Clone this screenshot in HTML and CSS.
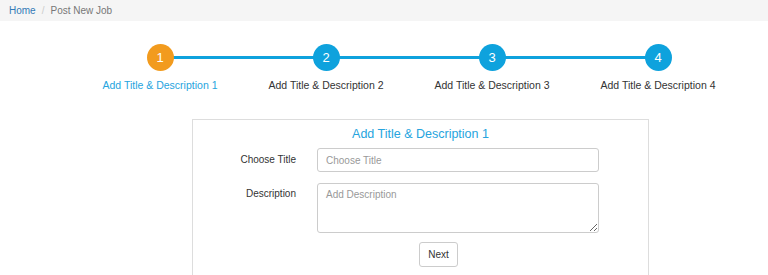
FILE: index.html
```html
<!DOCTYPE html>
<html lang="en">
<head>
    <meta charset="UTF-8">
    <title>Post New Job</title>
    <link rel="stylesheet" href="styles.css">
</head>
<body>
    <ol class="breadcrumb">
        <li><a href="#">Home</a></li>
        <li class="active">Post New Job</li>
    </ol>

    <div class="steps">
        <div class="step current">
            <span class="step-num">1</span>
            <span class="step-label">Add Title &amp; Description 1</span>
        </div>
        <div class="step">
            <span class="step-num">2</span>
            <span class="step-label">Add Title &amp; Description 2</span>
        </div>
        <div class="step">
            <span class="step-num">3</span>
            <span class="step-label">Add Title &amp; Description 3</span>
        </div>
        <div class="step">
            <span class="step-num">4</span>
            <span class="step-label">Add Title &amp; Description 4</span>
        </div>
    </div>

    <form class="step-panel">
        <h3 class="panel-title">Add Title &amp; Description 1</h3>
        <div class="form-row">
            <label class="form-label" for="title">Choose Title</label>
            <input class="form-input" id="title" type="text" placeholder="Choose Title">
        </div>
        <div class="form-row">
            <label class="form-label top" for="desc">Description</label>
            <textarea class="form-input area" id="desc" placeholder="Add Description"></textarea>
        </div>
        <button class="next-btn" type="button">Next</button>
    </form>
</body>
</html>
```

FILE: styles.css
```css
body {
    margin: 0;
    font-family: "Liberation Sans", Arial, sans-serif;
    background-color: #fff;
    color: #333;
}

.breadcrumb {
    display: flex;
    margin: 0;
    padding: 4px 9px;
    height: 21px;
    box-sizing: border-box;
    list-style: none;
    background-color: #f5f5f5;
    font-size: 10px;
    line-height: 13px;
}

.breadcrumb a {
    color: #337ab7;
    text-decoration: none;
}

.breadcrumb li + li::before {
    content: "/";
    padding: 0 6px;
    color: #ccc;
}

.breadcrumb .active {
    color: #777;
}

.steps {
    position: relative;
    display: flex;
    width: 664px;
    margin: 23px 0 0 77px;
}

.steps::before {
    content: "";
    position: absolute;
    left: 83px;
    right: 83px;
    top: 12px;
    height: 3px;
    background-color: #0ea2dd;
}

.step {
    flex: 1;
    display: flex;
    flex-direction: column;
    align-items: center;
    position: relative;
}

.step-num {
    width: 27px;
    height: 27px;
    border-radius: 50%;
    background-color: #0ea2dd;
    color: #fff;
    font-size: 13px;
    line-height: 27px;
    text-align: center;
}

.step.current .step-num {
    background-color: #f29b1e;
}

.step-label {
    margin-top: 7px;
    font-size: 10.5px;
    line-height: 14px;
    color: #333;
    white-space: nowrap;
}

.step.current .step-label {
    color: #26a4de;
}

.step-panel {
    width: 457px;
    box-sizing: border-box;
    margin: 27px 0 0 192px;
    padding: 6px 0 20px;
    border: 1px solid #ddd;
}

.panel-title {
    margin: 0 0 6px;
    font-size: 12.5px;
    line-height: 16px;
    font-weight: normal;
    text-align: center;
    color: #26a4de;
}

.form-row {
    display: flex;
    gap: 21px;
    margin-bottom: 11px;
}

.form-label {
    width: 103px;
    text-align: right;
    font-size: 10px;
    line-height: 24px;
}

.form-label.top {
    line-height: 14px;
    padding-top: 4px;
}

.form-input {
    width: 282px;
    height: 24px;
    box-sizing: border-box;
    padding: 4px 8px;
    border: 1px solid #ccc;
    border-radius: 3px;
    font-family: inherit;
    font-size: 10px;
    color: #555;
}

.form-input::placeholder {
    color: #999;
}

.form-input.area {
    height: 50px;
    padding-top: 5px;
    resize: vertical;
}

.next-btn {
    display: block;
    margin: -2px 0 0 226px;
    width: 39px;
    height: 25px;
    padding: 0;
    background-color: #fff;
    border: 1px solid #ccc;
    border-radius: 3px;
    font-family: inherit;
    font-size: 10px;
    color: #333;
    cursor: pointer;
}
```
